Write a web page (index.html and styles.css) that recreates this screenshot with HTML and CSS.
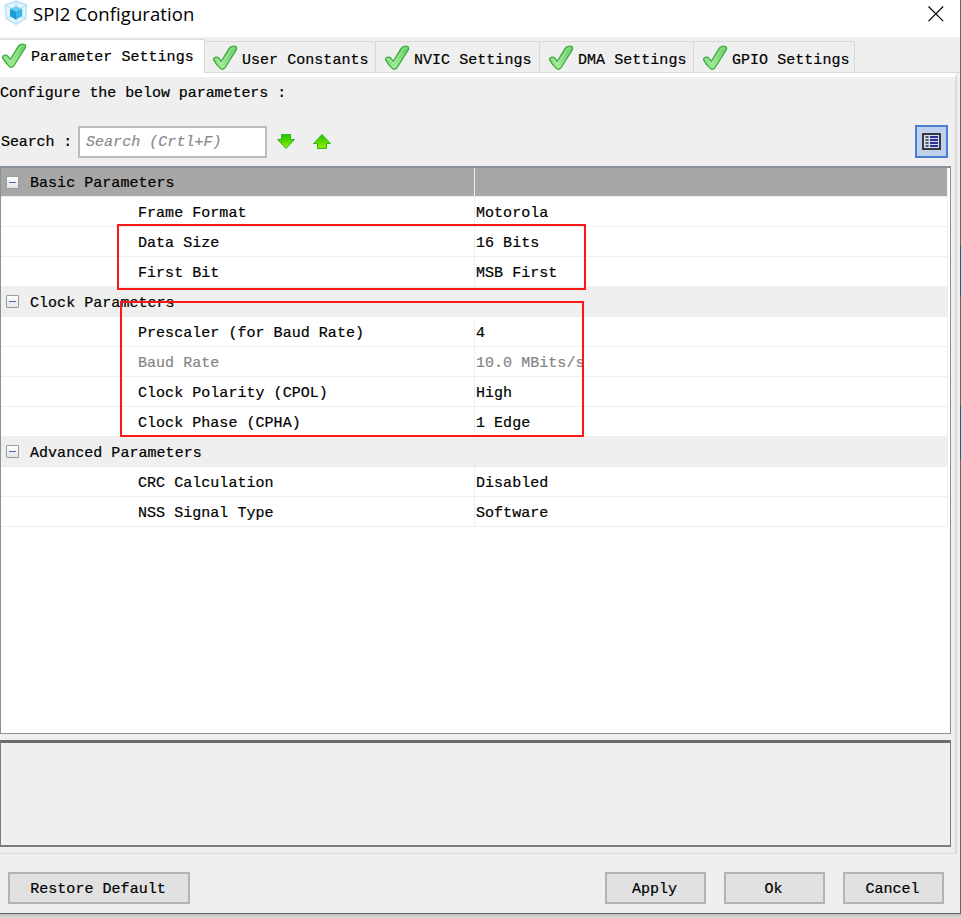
FILE: index.html
```
<!DOCTYPE html>
<html lang="en">
<head>
    <meta charset="UTF-8">
    <meta name="viewport" content="width=device-width, initial-scale=1.0">
    <title>SPI2 Configuration</title>
    <link rel="stylesheet" href="styles.css">
</head>
<body>
    <!-- shared icons -->
    <svg class="defs" width="0" height="0">
        <defs>
            <linearGradient id="green" x1="0" y1="0" x2="0" y2="1">
                <stop offset="0" stop-color="#66cc66"/>
                <stop offset="1" stop-color="#a4ed98"/>
            </linearGradient>
            <linearGradient id="lime" x1="0" y1="0" x2="0" y2="1">
                <stop offset="0" stop-color="#22c400"/>
                <stop offset="1" stop-color="#91ed00"/>
            </linearGradient>
            <symbol id="check" viewBox="0 0 26 26">
                <path d="M1.4 14.4 Q1.8 12.6 3.6 12.2 Q5.6 11.6 6.8 13.2 L9.3 16.2 L17.2 3.4 Q18.6 1 22 1 Q25.6 1.2 24.4 4.6 L13.6 21.8 Q11.4 25.6 8.4 23.4 Q4.4 20.2 1.4 14.4 Z" fill="url(#green)" stroke="#38a83f" stroke-width="1.2" stroke-linejoin="round"/>
                <path d="M3.6 14.6 Q5 13.4 6 15 L9.8 19 L19 4.4 Q20.4 2.6 22.6 3" fill="none" stroke="#c3f0bc" stroke-width="1" opacity=".6"/>
            </symbol>
        </defs>
    </svg>

    <div class="window">
        <div class="titlebar">
            <svg class="logo" width="24" height="26" viewBox="0 0 24 26">
                <path d="M12 1 L22.5 5 L21.5 18.5 L12 24.5 L2.5 18.5 L1 5 Z" fill="#e5f5fc" stroke="#b6e4f6" stroke-width="1.4"/>
                <path d="M1.5 5.5 L12 10 L22.5 5.5 M12 10 V24 M2.5 18.5 L12 13 L21.5 18.5 M12 1 V9" fill="none" stroke="#a9def3" stroke-width="1"/>
                <path d="M12 6.5 L18.2 9 V16 L12 19.5 L6 16 V9 Z" fill="#38b5e8"/>
                <path d="M6 9 L12 11.5 V19.5 L6 16 Z" fill="#199bd8"/>
                <path d="M6 9 L12 6.5 L18.2 9 L12 11.5 Z" fill="#6bcdf1"/>
            </svg>
            <span class="title">SPI2 Configuration</span>
            <svg class="close" width="16" height="16" viewBox="0 0 16 16">
                <path d="M.5 .5 L15.2 15.2 M15.2 .5 L.5 15.2" stroke="#000" stroke-width="1.2"/>
            </svg>
        </div>

        <div class="tabs">
            <div class="tab active"><svg class="check"><use href="#check"/></svg><span>Parameter Settings</span></div>
            <div class="tab user"><svg class="check"><use href="#check"/></svg><span>User Constants</span></div>
            <div class="tab nvic"><svg class="check"><use href="#check"/></svg><span>NVIC Settings</span></div>
            <div class="tab dma"><svg class="check"><use href="#check"/></svg><span>DMA Settings</span></div>
            <div class="tab gpio"><svg class="check"><use href="#check"/></svg><span>GPIO Settings</span></div>
        </div>

        <div class="pane">
            <p class="hint">Configure the below parameters :</p>
            <div class="toolbar">
                <label class="search-label" for="search">Search :</label>
                <input class="search" id="search" type="text" placeholder="Search (Crtl+F)">
                <svg class="arrow" width="20" height="18" viewBox="0 0 20 18">
                    <path d="M5.5 1.5 H14.5 V6.5 H18.5 L10 15.5 L1.5 6.5 H5.5 Z" fill="url(#lime)" stroke="#2db51c" stroke-width="1" stroke-linejoin="round"/>
                </svg>
                <svg class="arrow up" width="20" height="18" viewBox="0 0 20 18">
                    <path d="M10 1.5 L18.5 10.5 H14.5 V15.5 H5.5 V10.5 H1.5 Z" fill="url(#lime)" stroke="#2db51c" stroke-width="1" stroke-linejoin="round"/>
                </svg>
                <div class="view-button">
                    <svg width="19" height="17" viewBox="0 0 19 17">
                        <rect x="1" y="1" width="17" height="15" fill="#d4def0" stroke="#292929" stroke-width="1.8"/>
                        <path d="M3.5 4 H6.5 M3.5 7 H6.5 M3.5 10 H6.5 M3.5 13 H6.5" stroke="#303030" stroke-width="1.4"/>
                        <path d="M8 4 H16 M8 7 H16 M8 10 H16 M8 13 H16" stroke="#30309c" stroke-width="1.8"/>
                    </svg>
                </div>
            </div>

            <div class="grid">
                <div class="row group selected"><div class="name"><i class="toggle"></i>Basic Parameters</div><div class="value"></div></div>
                <div class="row"><div class="name">Frame Format</div><div class="value">Motorola</div></div>
                <div class="row"><div class="name">Data Size</div><div class="value">16 Bits</div></div>
                <div class="row"><div class="name">First Bit</div><div class="value">MSB First</div></div>
                <div class="row group"><div class="name"><i class="toggle"></i>Clock Parameters</div></div>
                <div class="row"><div class="name">Prescaler (for Baud Rate)</div><div class="value">4</div></div>
                <div class="row disabled"><div class="name">Baud Rate</div><div class="value">10.0 MBits/s</div></div>
                <div class="row"><div class="name">Clock Polarity (CPOL)</div><div class="value">High</div></div>
                <div class="row"><div class="name">Clock Phase (CPHA)</div><div class="value">1 Edge</div></div>
                <div class="row group"><div class="name"><i class="toggle"></i>Advanced Parameters</div></div>
                <div class="row"><div class="name">CRC Calculation</div><div class="value">Disabled</div></div>
                <div class="row"><div class="name">NSS Signal Type</div><div class="value">Software</div></div>
                <!-- highlighted settings -->
                <div class="mark mark-frame"></div>
                <div class="mark mark-clock"></div>
            </div>

            <div class="description"></div>
        </div>

        <div class="footer">
            <button class="restore">Restore Default</button>
            <button>Apply</button>
            <button>Ok</button>
            <button>Cancel</button>
        </div>
    </div>
</body>
</html>
```
FILE: styles.css
```
* {
    box-sizing: border-box;
}

body {
    margin: 0;
    width: 961px;
    height: 918px;
    overflow: hidden;
    background: linear-gradient(#bdbdbd, #dedede) 0 914px / 100% 4px no-repeat #dedede;
    font-family: "Liberation Mono", monospace;
    font-size: 15px;
    letter-spacing: 0.04px;
    color: #000;
    -webkit-text-stroke: 0.2px currentColor;
}

.defs {
    position: absolute;
}

.window {
    display: flex;
    flex-direction: column;
    height: 914px;
    background-color: #efefef;
    border-right: 1px solid #666;
    border-bottom: 1px solid #707070;
    /* what shows through behind the window edge */
    border-image: linear-gradient(#666 27%, #006a8c 27% 32.5%, #666 32.5% 44.5%, #006a8c 44.5% 50.3%, #666 50.3%) 1;
    border-image-width: 0 1px 1px 0;
}

.titlebar {
    display: flex;
    height: 37px;
    padding: 0 16px 0 4px;
    background-color: #fff;
}

.logo {
    margin-right: 5px;
}

.title {
    font-family: "Open Sans", "Noto Sans", sans-serif;
    font-size: 18.5px;
    line-height: 27px;
    letter-spacing: 0.09px;
    white-space: nowrap;
    -webkit-text-stroke: 0;
}

.close {
    margin: 6px 0 0 auto;
}

.tabs {
    display: flex;
    align-items: flex-end;
    height: 36px;
    padding-top: 2px;
    border-bottom: 1px solid #dadada;
}

.tab {
    display: flex;
    align-items: center;
    gap: 4px;
    height: 31px;
    padding: 1px 0 0 7px;
    border-top: 1px solid #d9d9d9;
    border-right: 1px solid #d9d9d9;
    white-space: nowrap;
}

.tab span {
    padding-top: 5px;
}

.tab.active {
    width: 205px;
    height: 34px;
    padding: 0 0 2px 1px;
    margin-bottom: -1px;
    background-color: #fff;
}

.tab.active span {
    padding-top: 4px;
}

.user {
    width: 171px;
}

.nvic {
    width: 164px;
    padding-left: 8px;
}

.dma {
    width: 154px;
    padding-left: 8px;
}

.gpio {
    width: 161px;
    padding-left: 8px;
}

.check {
    flex: none;
    width: 26px;
    height: 26px;
}

.pane {
    width: 957px;
    height: 781px;
    padding-right: 5px;
    border-top: 4px solid #fff;
    border-right: 2px solid #dcdcdc;
    border-bottom: 1px solid #dcdcdc;
}

.hint {
    height: 48px;
    margin: 0;
    line-height: 34px;
    letter-spacing: -0.06px;
}

.toolbar {
    display: flex;
    align-items: center;
    height: 33px;
    padding: 0 2px 0 1px;
}

.search-label {
    width: 77px;
    padding-top: 2px;
    white-space: nowrap;
    letter-spacing: -0.1px;
}

.search {
    width: 189px;
    height: 32px;
    padding: 2px 6px 0;
    border: 2px solid #bcbcc0;
    background-color: #fff;
    font: inherit;
    letter-spacing: inherit;
    outline: none;
}

.search::placeholder {
    color: #8b8b8b;
    font-style: italic;
}

.arrow {
    margin-left: 9px;
}

.arrow.up {
    margin-left: 16px;
}

.view-button {
    display: flex;
    align-items: center;
    justify-content: center;
    width: 33px;
    height: 33px;
    margin-left: auto;
    border: 2px solid #4a7ed3;
    background-color: #bfd0ee;
}

.grid {
    position: relative;
    width: 951px;
    height: 568px;
    margin-top: 8px;
    padding-right: 2px;
    border: 1px solid #8b9199;
    border-top-width: 2px;
    background-color: #fff;
}

.row {
    display: flex;
    height: 30px;
    border-bottom: 1px solid #eee;
    border-right: 1px solid #eee;
    line-height: 33px;
    white-space: nowrap;
}

.row .name {
    width: 473px;
    padding-left: 137px;
}

.row .value {
    flex: 1;
    padding-left: 1px;
    border-left: 1px solid #eee;
}

.row.group {
    background-color: #efefef;
}

.group .name {
    display: flex;
    padding-left: 5px;
}

.row.selected {
    height: 29px;
    line-height: 31px;
    background-color: #a7a7a7;
}

.disabled {
    color: #858585;
}

.toggle {
    width: 13px;
    height: 13px;
    margin: 8px 11px 0 0;
    border: 1px solid #9b9b9b;
    border-radius: 1px;
    background: linear-gradient(#4964a8, #4964a8) center / 7px 1px no-repeat, linear-gradient(#fff, #e4e4e4);
}

.mark {
    position: absolute;
    border: 2px solid #fb1717;
}

.mark-frame {
    left: 116px;
    top: 56px;
    width: 469px;
    height: 66px;
}

.mark-clock {
    left: 119px;
    top: 133px;
    width: 464px;
    height: 136px;
}

.description {
    width: 951px;
    height: 107px;
    margin-top: 6px;
    border: 1px solid #7c7c7c;
    border-top: 3px solid #6b6b6b;
    border-bottom-width: 2px;
}

.footer {
    display: flex;
    gap: 18px;
    padding: 18px 16px 0 8px;
}

button {
    width: 101px;
    height: 32px;
    padding: 3px 2px 0 0;
    border: 2px solid #b4b4b4;
    background-color: #e1e1e1;
    font: inherit;
    letter-spacing: inherit;
    color: #000;
}

button:hover {
    background-color: #e5f1fb;
}

.restore {
    width: 182px;
    margin-right: auto;
}
```
